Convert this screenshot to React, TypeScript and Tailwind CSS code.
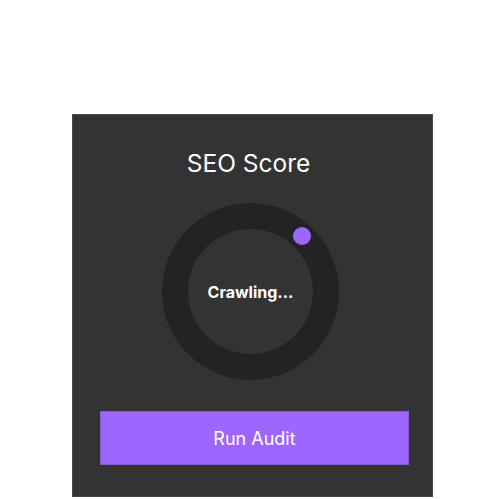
export default function App() {
  return (
    <div className="min-h-screen bg-white pt-[114px] pl-[72px]" style={{ fontFamily: "Inter, 'Noto Sans', sans-serif" }}>
      <div className="w-[361px] border border-[#4a4a4a] bg-[#333333] pl-[27px] pr-[23px] pt-[32px] pb-[31px] flex flex-col items-center">
        <h2 className="mr-[12px] text-[24.5px] leading-[32px] text-white">SEO Score</h2>

        {/* progress ring */}
        <div className="relative mr-[8px] mt-[24px] w-[177px] h-[177px] rounded-full bg-[#232323] flex items-center justify-center">
          <div className="w-[125px] h-[125px] rounded-full bg-[#333333] flex items-center justify-center">
            <span className="text-[16px] font-bold text-white">Crawling...</span>
          </div>
          <span className="absolute left-[131px] top-[24px] w-[18px] h-[18px] rounded-full bg-[#9d66fc]" />
        </div>

        <button className="mt-[31px] w-full h-[54px] border border-[#8a5ad9] bg-[#9f66ff] text-white text-[18px]">Run Audit</button>
      </div>
    </div>
  );
}
